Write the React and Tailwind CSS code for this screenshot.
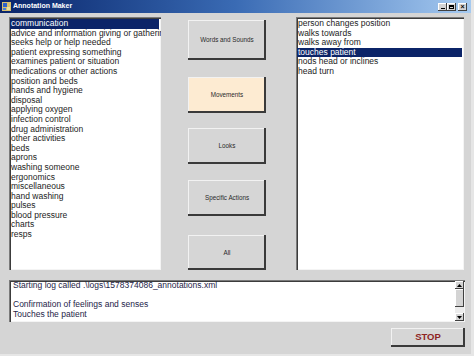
import React from "react";

const categories = [
  "communication",
  "advice and information giving or gathering",
  "seeks help or help needed",
  "patient expressing something",
  "examines patient or situation",
  "medications or other actions",
  "position and beds",
  "hands and hygiene",
  "disposal",
  "applying oxygen",
  "infection control",
  "drug administration",
  "other activities",
  "beds",
  "aprons",
  "washing someone",
  "ergonomics",
  "miscellaneous",
  "hand washing",
  "pulses",
  "blood pressure",
  "charts",
  "resps",
];

const movements = [
  "person changes position",
  "walks towards",
  "walks away from",
  "touches patient",
  "nods head or inclines",
  "head turn",
];

// sunken classic listbox
function ListBox({ items, selected, className }) {
  return (
    <div
      className={`bg-white overflow-hidden pt-[2px] pl-[1px] shadow-[inset_1px_1px_#7a7a7a,inset_2px_2px_#3c3c3c,inset_-1px_-1px_#f4f4f4] ${className}`}
    >
      {items.map((item, i) => (
        <div
          key={item}
          className={`h-[9.6px] leading-[9.6px] pl-[1px] mr-[2px] whitespace-nowrap text-[8.5px] ${
            i === selected ? "bg-[#0b2468] text-white" : "text-[#1c1c1c]"
          }`}
        >
          {item}
        </div>
      ))}
    </div>
  );
}

function ClassicButton({ label, active, className }) {
  return (
    <div
      className={`flex items-center justify-center text-[6.3px] text-[#2a2a2a] shadow-[inset_-2px_-2px_#3a3a3a,inset_1px_1px_#f2f2f2] ${
        active ? "bg-[#fdebd2]" : "bg-[#d6d6d6]"
      } ${className}`}
    >
      {label}
    </div>
  );
}

function TitleBar() {
  return (
    <div className="h-[13px] flex items-center bg-linear-to-r from-[#0a246a] via-[#3a6bb4] to-[#a6caf0] pl-[2px] pr-[4px]">
      <svg width="9" height="9" viewBox="0 0 9 9">
        <rect x="0" y="0" width="9" height="9" fill="#d8c070" />
        <rect x="1" y="1" width="4" height="4" fill="#2f62c9" />
        <rect x="5" y="5" width="3" height="3" fill="#e8e0a0" />
        <rect x="1" y="6" width="3" height="2" fill="#4c7fd8" />
      </svg>
      <span className="ml-[2px] text-[7px] font-bold text-white">Annotation Maker</span>
      <div className="ml-auto flex gap-[0px]">
        <div className="w-[9px] h-[8px] bg-[#d4d4d4] shadow-[inset_-1px_-1px_#404040,inset_1px_1px_#fff] flex items-end justify-center pb-[2px]">
          <div className="w-[4px] h-[1px] bg-black" />
        </div>
        <div className="w-[9px] h-[8px] bg-[#d4d4d4] shadow-[inset_-1px_-1px_#404040,inset_1px_1px_#fff] flex items-center justify-center">
          <div className="w-[5px] h-[4px] border border-black border-t-2" />
        </div>
        <div className="ml-[2px] w-[9px] h-[8px] bg-[#d4d4d4] shadow-[inset_-1px_-1px_#404040,inset_1px_1px_#fff] flex items-center justify-center text-[7px] leading-none text-black font-bold">
          ×
        </div>
      </div>
    </div>
  );
}

export default function App() {
  return (
    <div className="w-[474px] h-[356px] bg-[#d5d5d5] flex flex-col overflow-hidden font-['Liberation_Sans',Arial,sans-serif] border-r-[3px] border-b-[2px] border-[#e6e6e6]">
      <TitleBar />

      <div className="flex mt-[4px] pl-[9px] h-[253px]">
        <ListBox items={categories} selected={0} className="w-[152px] h-full" />

        <div className="ml-[27px] w-[78px] flex flex-col pt-[3px]">
          <ClassicButton label="Words and Sounds" className="h-[40px]" />
          <ClassicButton label="Movements" active className="h-[36px] mt-[17px]" />
          <ClassicButton label="Looks" className="h-[36px] mt-[15px]" />
          <ClassicButton label="Specific Actions" className="h-[36px] mt-[16px]" />
          <ClassicButton label="All" className="h-[35px] mt-[19px]" />
        </div>

        <ListBox items={movements} selected={3} className="ml-[30px] w-[168px] h-full" />
      </div>

      {/* log output */}
      <div className="ml-[9px] mt-[10px] w-[456px] h-[42px] flex bg-white shadow-[inset_1px_1px_#7a7a7a,inset_2px_2px_#3c3c3c,inset_-1px_-1px_#f4f4f4]">
        <div className="flex-1 pt-[1px] pl-[4px] text-[8.5px] leading-[9.7px] text-[#1e2448]">
          <div>Starting log called .\logs\1578374086_annotations.xml</div>
          <div>&nbsp;</div>
          <div>Confirmation of feelings and senses</div>
          <div>Touches the patient</div>
        </div>
        <div className="w-[9px] mt-[1px] mb-[1px] mr-[1px] flex flex-col bg-[#ececec]">
          <div className="h-[8px] bg-[#d4d4d4] shadow-[inset_-1px_-1px_#404040,inset_1px_1px_#fff] flex items-center justify-center">
            <svg width="5" height="3" viewBox="0 0 5 3">
              <path d="M2.5 0L5 3H0z" fill="#000" />
            </svg>
          </div>
          <div className="h-[18px] bg-[#d4d4d4] shadow-[inset_-1px_-1px_#404040,inset_1px_1px_#fff]" />
          <div className="flex-1" />
          <div className="h-[8px] bg-[#d4d4d4] shadow-[inset_-1px_-1px_#404040,inset_1px_1px_#fff] flex items-center justify-center">
            <svg width="5" height="3" viewBox="0 0 5 3">
              <path d="M0 0H5L2.5 3z" fill="#000" />
            </svg>
          </div>
        </div>
      </div>

      <div className="flex justify-end pr-[6px] mt-[6px]">
        <div className="w-[74px] h-[19px] flex items-center justify-center bg-[#d6d6d6] text-[9.5px] font-bold text-[#8e2424] shadow-[inset_-2px_-2px_#3a3a3a,inset_1px_1px_#f2f2f2]">
          STOP
        </div>
      </div>
    </div>
  );
}
